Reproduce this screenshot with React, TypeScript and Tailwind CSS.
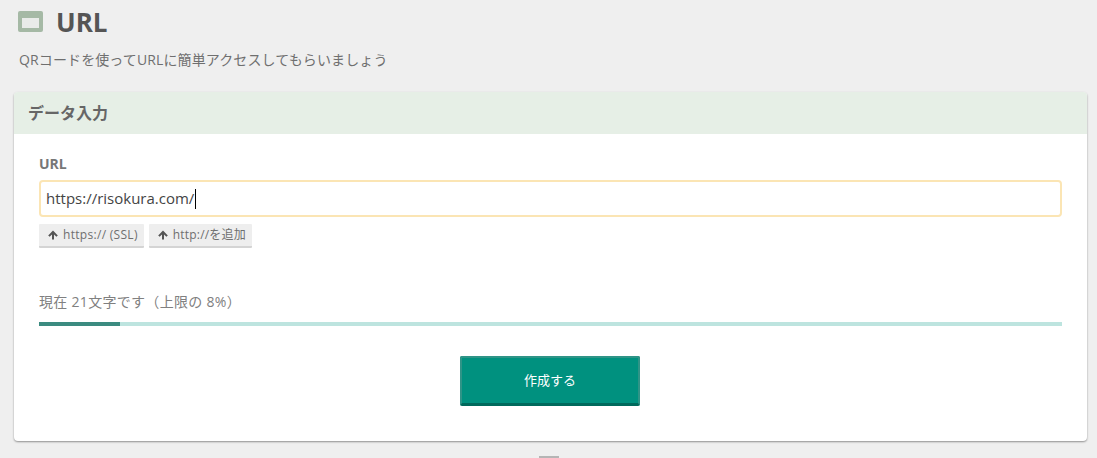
import React from "react";

const font = { fontFamily: '"Open Sans", "Noto Sans CJK JP", sans-serif' };

function ArrowUp() {
  return (
    <svg viewBox="0 0 10 10" className="h-[10px] w-[10px] fill-[#555]">
      <path d="M5 .6 9.8 5.4 8.4 6.7 6 4.4V9.6H4V4.4L1.6 6.7.2 5.4Z" />
    </svg>
  );
}

function TagButton({ label, spacing }: { label: string; spacing: string }) {
  return (
    <button className={`flex h-[24px] items-center gap-[5px] rounded-[1px] border-b-2 border-[#d4d4d4] bg-[#eeeeee] pl-[9px] pr-[6px] text-[12px] leading-none text-[#6f6f6f] ${spacing}`}>
      <ArrowUp />
      {label}
    </button>
  );
}

export default function App() {
  return (
    <main style={font} className="h-[458px] w-[1097px] overflow-hidden bg-[#efefef] pl-[14px] pr-[10px]">
      <div className="flex h-[43px] items-center pl-[4px]">
        <div className="h-[21px] w-[25px] rounded-[2px] bg-[#a5b9a5] px-[4px] pb-[4px] pt-[7px]">
          <div className="h-full w-full bg-[#e9ebe9]" />
        </div>
        <h1 className="ml-[13px] text-[26px] font-bold leading-none text-[#555]">URL</h1>
      </div>
      <p className="mt-[7px] pl-[5px] text-[14px] leading-[20px] tracking-[0.12px] text-[#6f6f6f]">
        QRコードを使ってURLに簡単アクセスしてもらいましょう
      </p>
      <section className="mt-[22px] h-[349px] overflow-hidden rounded-[4px] bg-white shadow-[0_1px_2px_rgba(0,0,0,0.4)]">
        <h2 className="flex h-[42px] items-center bg-[#e6efe6] pl-[14px] text-[16px] font-bold text-[#666]">
          データ入力
        </h2>
        <div className="px-[25px] pt-[22px]">
          <label className="block text-[14px] font-bold leading-[16px] text-[#777]">URL</label>
          <div className="mt-[8px] flex h-[37px] items-center rounded-[4px] border-2 border-[#fbe5b4] pl-[5px] text-[15px] text-[#444]">
            https://risokura.com/
            <span className="ml-[1px] h-[20px] w-px bg-black" />
          </div>
          <div className="mt-[7px] flex gap-[5px]">
            <TagButton label="https:// (SSL)" spacing="tracking-[0.3px]" />
            <TagButton label="http://を追加" spacing="tracking-[0.2px]" />
          </div>
          <p className="mt-[44px] text-[14px] leading-[20px] tracking-[0.3px] text-[#808080]">現在 21文字です（上限の 8%）</p>
          <div className="mt-[10px] h-[4px] bg-[#bde4df]">
            <div className="h-full w-[81px] bg-[#3b8b80]" />
          </div>
          <div className="mt-[30px] flex justify-center pr-[1px]">
            <button className="h-[50px] w-[180px] rounded-[2px] border-x-2 border-b-[3px] border-t-2 border-x-[#2f9487] border-b-[#00695c] border-t-[#2f9487] bg-[#00917f] text-[13px] text-white">
              作成する
            </button>
          </div>
        </div>
      </section>
      <div className="mx-auto mt-[15px] h-[2px] w-[20px] -translate-x-[2px] bg-[#b5b5b5]" />
    </main>
  );
}
